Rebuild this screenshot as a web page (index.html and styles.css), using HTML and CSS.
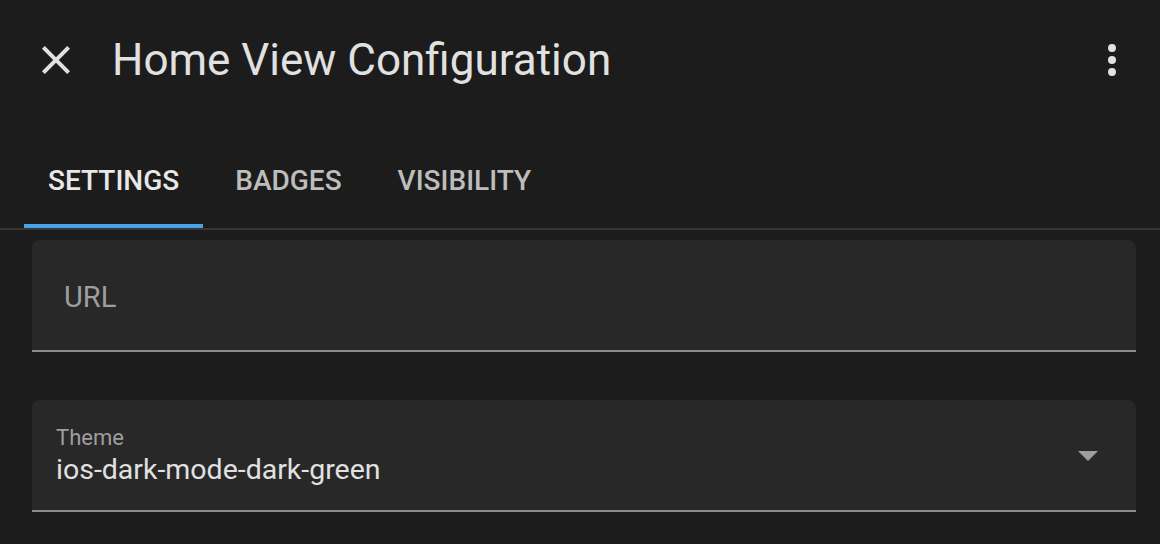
FILE: index.html
```html
<!DOCTYPE html>
<html lang="en">
<head>
    <meta charset="UTF-8">
    <meta name="viewport" content="width=device-width, initial-scale=1.0">
    <title>Home View Configuration</title>

    <link rel="stylesheet" href="styles.css">
</head>
<body>

    <header class="toolbar">
        <button class="icon-btn" aria-label="Close">
            <svg viewBox="0 0 24 24"><path d="M19,6.41L17.59,5L12,10.59L6.41,5L5,6.41L10.59,12L5,17.59L6.41,19L12,13.41L17.59,19L19,17.59L13.41,12L19,6.41Z"/></svg>
        </button>
        <h1 class="title">Home View Configuration</h1>
        <button class="icon-btn menu" aria-label="Menu">
            <svg viewBox="0 0 24 24"><path d="M12,16A2,2 0 0,1 14,18A2,2 0 0,1 12,20A2,2 0 0,1 10,18A2,2 0 0,1 12,16M12,10A2,2 0 0,1 14,12A2,2 0 0,1 12,14A2,2 0 0,1 10,12A2,2 0 0,1 12,10M12,4A2,2 0 0,1 14,6A2,2 0 0,1 12,8A2,2 0 0,1 10,6A2,2 0 0,1 12,4Z"/></svg>
        </button>
    </header>

    <nav class="tabs">
        <div class="tab active">Settings</div>
        <div class="tab">Badges</div>
        <div class="tab">Visibility</div>
    </nav>

    <main class="content">
        <div class="field">
            <span class="placeholder">URL</span>
        </div>

        <div class="field select">
            <div class="field-text">
                <span class="label">Theme</span>
                <span class="value">ios-dark-mode-dark-green</span>
            </div>
            <span class="arrow"></span>
        </div>
    </main>

</body>
</html>
```

FILE: styles.css
```css
body {
    margin: 0;
    background-color: #1c1c1c;
    font-family: Roboto, "Noto Sans", sans-serif;
    color: #e1e1e1;
    overflow: hidden;
}

.toolbar {
    display: flex;
    align-items: center;
    height: 120px;
    padding: 0 24px 0 32px;
}

.icon-btn {
    width: 48px;
    height: 48px;
    padding: 0;
    border: none;
    background: none;
    cursor: pointer;
}

.icon-btn svg {
    width: 48px;
    height: 48px;
    fill: #e1e1e1;
}

.title {
    flex: 1;
    margin: 0 0 0 32px;
    font-size: 44px;
    font-weight: 400;
    color: #e1e1e1;
}

.tabs {
    display: flex;
    gap: 8px;
    height: 96px;
    margin-top: 12px;
    padding-left: 24px;
    border-bottom: 2px solid #363636;
}

.tab {
    display: flex;
    align-items: center;
    padding: 0 24px;
    font-size: 28px;
    font-weight: 500;
    text-transform: uppercase;
    color: #bdbdbd;
    border-bottom: 4px solid transparent;
    padding-top: 4px;
}

.tab.active {
    color: #e8e8e8;
    border-bottom-color: #4aa3e6;
}

.content {
    display: flex;
    flex-direction: column;
    gap: 48px;
    padding: 10px 24px 0 32px;
}

.field {
    display: flex;
    align-items: center;
    height: 110px;
    padding: 0 32px;
    background-color: #282828;
    border-radius: 8px 8px 0 0;
    border-bottom: 2px solid #8c8c8c;
}

.placeholder {
    font-size: 29px;
    color: #9e9e9e;
    padding-top: 4px;
}

.field.select {
    padding: 0 38px 0 24px;
}

.field-text {
    flex: 1;
    display: flex;
    flex-direction: column;
    padding-top: 6px;
}

.label {
    margin-top: -2px;
    font-size: 22px;
    line-height: 24px;
    color: #9e9e9e;
}

.value {
    margin-top: 2px;
    font-size: 28.5px;
    line-height: 36px;
    color: #e1e1e1;
}

.arrow {
    width: 0;
    height: 0;
    margin-top: 2px;
    border-left: 10px solid transparent;
    border-right: 10px solid transparent;
    border-top: 10px solid #9e9e9e;
}
```
